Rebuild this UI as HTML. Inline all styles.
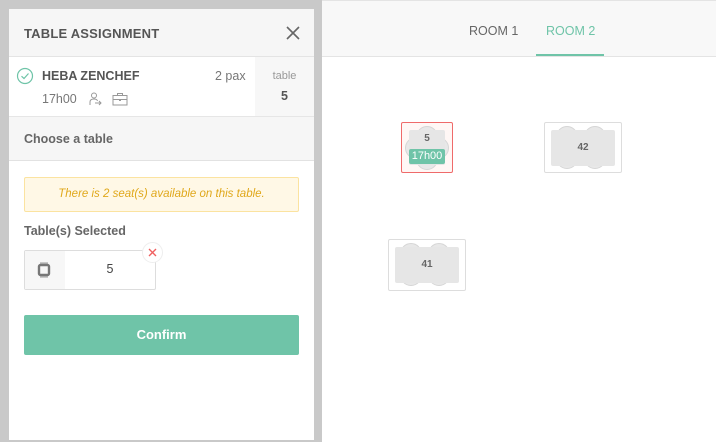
<!DOCTYPE html>
<html><head><style>
*{box-sizing:border-box;margin:0;padding:0}
body{width:716px;height:442px;overflow:hidden;background:#fff;font-family:"Liberation Sans",sans-serif;position:relative;color:#555}
.abs{position:absolute}
.chair{position:absolute;width:22px;height:22px;border-radius:50%;background:#e8e8e8;border:1px solid #d6d6d6}
.top{position:absolute;background:#e6e6e6;border-radius:2px;font-size:10px;font-weight:bold;color:#666;text-align:center}
</style></head><body>
<div class="abs" style="left:0;top:0;width:322px;height:442px;background:#c9c9c9"></div>
<div class="abs" style="left:9px;top:9px;width:305px;height:431px;background:#fff"></div>
<!-- header -->
<div class="abs" style="left:9px;top:9px;width:305px;height:48px;background:#f6f6f6;border-bottom:1px solid #e4e4e4"></div>
<div class="abs" style="left:24px;top:26px;font-size:13px;font-weight:bold;color:#555;letter-spacing:0.2px">TABLE ASSIGNMENT</div>
<svg class="abs" style="left:286px;top:26px" width="14" height="14"><path d="M1 1L13 13M13 1L1 13" stroke="#666" stroke-width="1.6"/></svg>
<!-- reservation row -->
<div class="abs" style="left:255px;top:57px;width:59px;height:59px;background:#f7f7f7"></div>
<div class="abs" style="left:9px;top:116px;width:305px;height:45px;background:#f6f6f6;border-top:1px solid #e6e6e6;border-bottom:1px solid #e2e2e2"></div>
<svg class="abs" style="left:16px;top:67px" width="18" height="18"><circle cx="9" cy="9" r="7.5" fill="none" stroke="#6fc4a8" stroke-width="1.2"/><path d="M5.5 9.2L8 11.5L12.5 6.5" fill="none" stroke="#6fc4a8" stroke-width="1.2"/></svg>
<div class="abs" style="left:42px;top:69px;font-size:12.5px;font-weight:bold;color:#555">HEBA ZENCHEF</div>
<div class="abs" style="left:215px;top:69px;font-size:12.5px;color:#777">2 pax</div>
<div class="abs" style="left:42px;top:92px;font-size:12.5px;color:#777">17h00</div>
<svg class="abs" style="left:89px;top:92px" width="16" height="14"><circle cx="5" cy="3.5" r="2.5" fill="none" stroke="#999"/><path d="M1 13V10Q1 7 5 7Q8 7 8.5 9M6 11H12M10 9L12 11L10 13" fill="none" stroke="#999"/></svg>
<svg class="abs" style="left:112px;top:92px" width="16" height="14"><rect x="1" y="3.5" width="14" height="9.5" fill="none" stroke="#999"/><path d="M5.5 3.5V1.5H10.5V3.5M1 7.5H15" fill="none" stroke="#999"/><rect x="7" y="7" width="2" height="2" fill="#999"/></svg>
<div class="abs" style="left:255px;top:70px;width:59px;text-align:center;font-size:11px;color:#999">table</div>
<div class="abs" style="left:255px;top:89px;width:59px;text-align:center;font-size:12.5px;font-weight:bold;color:#555">5</div>
<div class="abs" style="left:24px;top:132px;font-size:12.5px;font-weight:bold;color:#666">Choose a table</div>
<!-- alert -->
<div class="abs" style="left:24px;top:177px;width:275px;height:35px;background:#fff8e6;border:1px solid #fbe3a0;border-radius:2px;text-align:center;line-height:33px;font-size:11.5px;font-style:italic;color:#e0a81b">There is 2 seat(s) available on this table.</div>
<div class="abs" style="left:24px;top:224px;font-size:12.5px;font-weight:bold;color:#666">Table(s) Selected</div>
<div class="abs" style="left:24px;top:250px;width:132px;height:40px;border:1px solid #ddd;border-radius:2px;background:#fff"></div>
<div class="abs" style="left:25px;top:251px;width:40px;height:38px;background:#f7f7f7"></div>
<svg class="abs" style="left:36px;top:262px" width="16" height="16"><rect x="3" y="3" width="10" height="10" rx="1.5" fill="none" stroke="#777" stroke-width="2.4"/><path d="M4 1H12M4 15H12" stroke="#999" stroke-width="1"/></svg>
<div class="abs" style="left:65px;top:262px;width:90px;text-align:center;font-size:12.5px;color:#444">5</div>
<div class="abs" style="left:142px;top:242px;width:21px;height:21px;border-radius:50%;background:#fff;border:1px solid #eee"></div>
<svg class="abs" style="left:148px;top:248px" width="9" height="9"><path d="M1 1L8 8M8 1L1 8" stroke="#f06060" stroke-width="1.4"/></svg>
<div class="abs" style="left:24px;top:315px;width:275px;height:40px;background:#6fc4a8;border-radius:2px;color:#fff;text-align:center;line-height:40px;font-size:13px;font-weight:bold">Confirm</div>
<!-- right -->
<div class="abs" style="left:322px;top:0;width:394px;height:1px;background:#e4e4e4"></div>
<div class="abs" style="left:322px;top:1px;width:394px;height:56px;background:#f8f8f8;border-bottom:1px solid #e4e4e4"></div>
<div class="abs" style="left:469px;top:24px;font-size:12.5px;color:#666">ROOM 1</div>
<div class="abs" style="left:546px;top:24px;font-size:12.5px;color:#6fc4a8">ROOM 2</div>
<div class="abs" style="left:536px;top:54px;width:68px;height:2px;background:#6fc4a8"></div>
<!-- table 5 -->
<div class="abs" style="left:401px;top:122px;width:52px;height:51px;border:1px solid #ef6a6a;border-radius:2px;background:#fff7f5"></div>
<div class="chair" style="left:416px;top:126px"></div>
<div class="chair" style="left:416px;top:148px"></div>
<div class="chair" style="left:405px;top:137px"></div>
<div class="chair" style="left:427px;top:137px"></div>
<div class="top" style="left:409px;top:130px;width:36px;height:35px;padding-top:3px">5</div>
<div class="abs" style="left:409px;top:149px;width:36px;height:15px;background:#6fc4a8;border-radius:2px;color:#fff;font-size:11px;text-align:center;line-height:15px">17h00</div>
<!-- table 42 -->
<div class="abs" style="left:544px;top:122px;width:78px;height:51px;border:1px solid #ddd;border-radius:2px"></div>
<div class="chair" style="left:556px;top:126px"></div><div class="chair" style="left:584px;top:126px"></div>
<div class="chair" style="left:556px;top:147px"></div><div class="chair" style="left:584px;top:147px"></div>
<div class="top" style="left:551px;top:130px;width:64px;height:36px;line-height:36px">42</div>
<!-- table 41 -->
<div class="abs" style="left:388px;top:239px;width:78px;height:52px;border:1px solid #ddd;border-radius:2px"></div>
<div class="chair" style="left:400px;top:243px"></div><div class="chair" style="left:428px;top:243px"></div>
<div class="chair" style="left:400px;top:264px"></div><div class="chair" style="left:428px;top:264px"></div>
<div class="top" style="left:395px;top:247px;width:64px;height:36px;line-height:36px">41</div>
</body></html>
